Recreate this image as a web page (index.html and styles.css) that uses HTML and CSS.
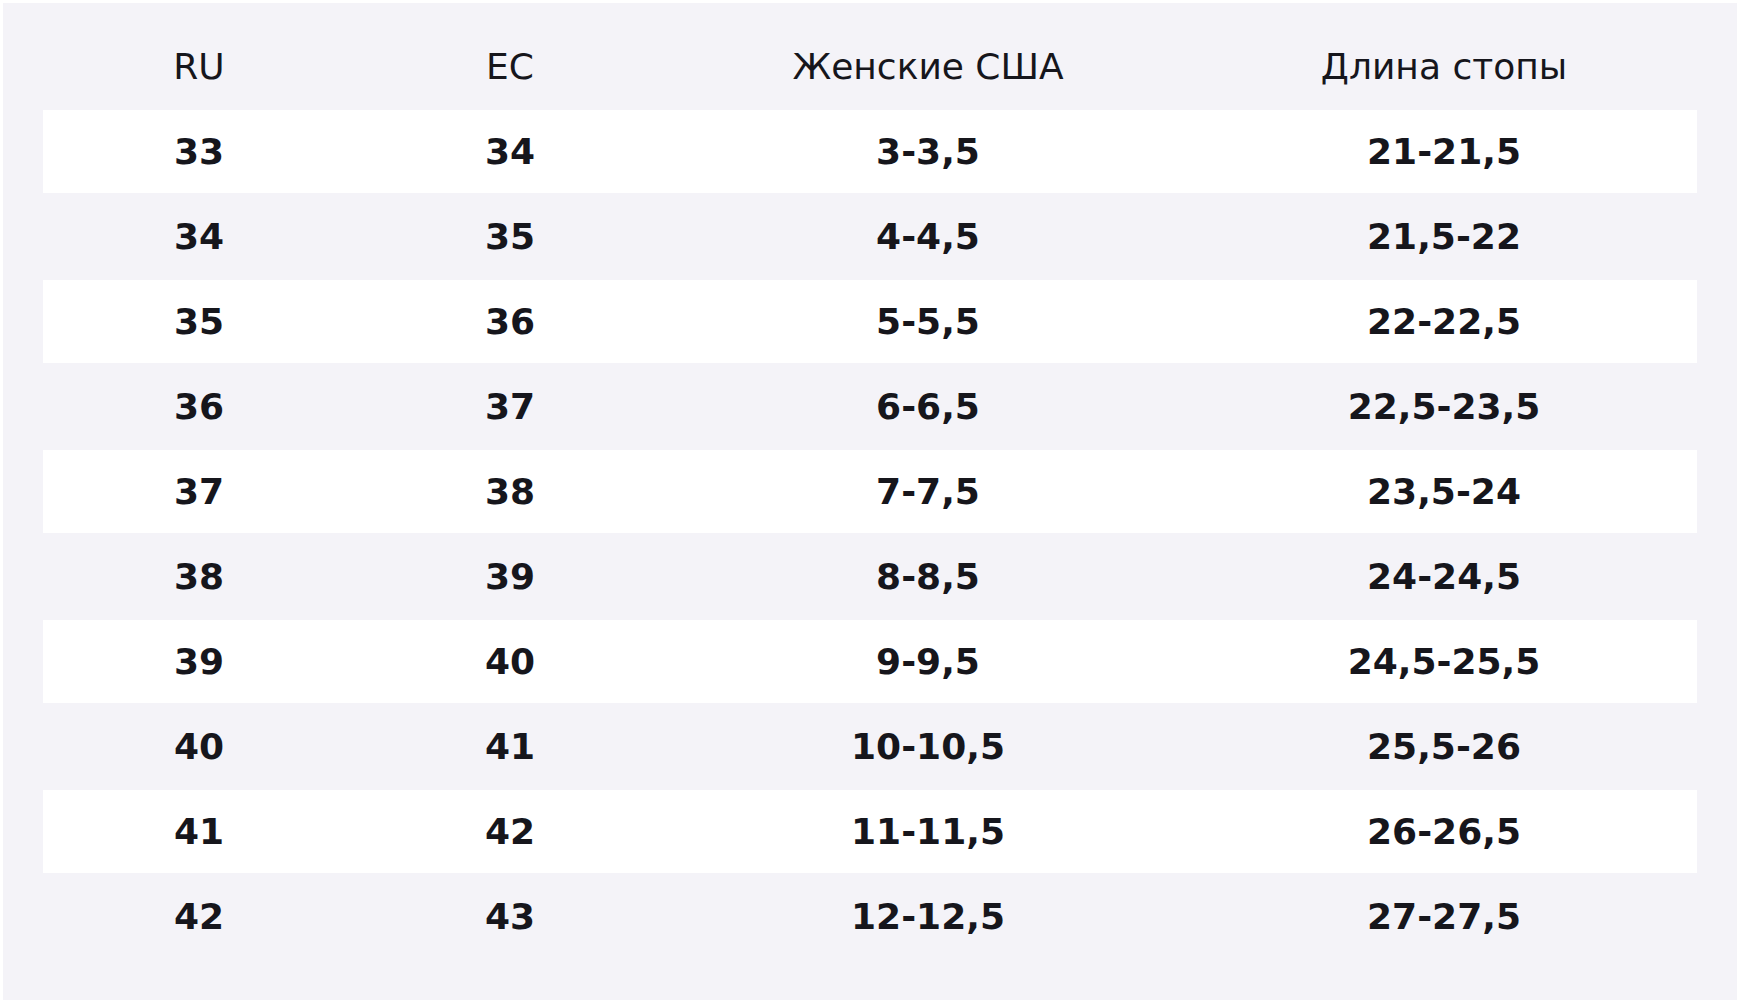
FILE: index.html
```html
<!DOCTYPE html>
<html lang="ru">
<head>
<meta charset="utf-8">
<title>Таблица размеров</title>
<link rel="stylesheet" href="styles.css">
</head>
<body>
<div class="card">
  <div class="table">
    <div class="row head">
      <div class="cell">RU</div>
      <div class="cell">EC</div>
      <div class="cell">Женские США</div>
      <div class="cell">Длина стопы</div>
    </div>
    <div class="row odd"><div class="cell">33</div><div class="cell">34</div><div class="cell">3-3,5</div><div class="cell">21-21,5</div></div>
    <div class="row"><div class="cell">34</div><div class="cell">35</div><div class="cell">4-4,5</div><div class="cell">21,5-22</div></div>
    <div class="row odd"><div class="cell">35</div><div class="cell">36</div><div class="cell">5-5,5</div><div class="cell">22-22,5</div></div>
    <div class="row"><div class="cell">36</div><div class="cell">37</div><div class="cell">6-6,5</div><div class="cell">22,5-23,5</div></div>
    <div class="row odd"><div class="cell">37</div><div class="cell">38</div><div class="cell">7-7,5</div><div class="cell">23,5-24</div></div>
    <div class="row"><div class="cell">38</div><div class="cell">39</div><div class="cell">8-8,5</div><div class="cell">24-24,5</div></div>
    <div class="row odd"><div class="cell">39</div><div class="cell">40</div><div class="cell">9-9,5</div><div class="cell">24,5-25,5</div></div>
    <div class="row"><div class="cell">40</div><div class="cell">41</div><div class="cell">10-10,5</div><div class="cell">25,5-26</div></div>
    <div class="row odd"><div class="cell">41</div><div class="cell">42</div><div class="cell">11-11,5</div><div class="cell">26-26,5</div></div>
    <div class="row"><div class="cell">42</div><div class="cell">43</div><div class="cell">12-12,5</div><div class="cell">27-27,5</div></div>
  </div>
</div>
</body>
</html>
```
FILE: styles.css
```css
html, body {
  margin: 0;
  padding: 0;
  background: #ffffff;
}

body {
  font-family: "DejaVu Sans", "Noto Sans", sans-serif;
  color: #16161c;
}

.card {
  margin: 3px;
  width: 1734px;
  height: 997px;
  box-sizing: border-box;
  padding: 40px;
  background: #f4f3f8;
}

.table {
  display: flex;
  flex-direction: column;
  gap: 2px;
}

.row {
  display: grid;
  grid-template-columns: 312px 310px 526px 506px;
  height: 83px;
  align-items: center;
  font-size: 36px;
  font-weight: bold;
  line-height: 42px;
}

.row.odd {
  background: #ffffff;
}

.row.head {
  height: 65px;
  align-items: start;
  padding-top: 3px;
  box-sizing: border-box;
  font-weight: normal;
}

.cell {
  text-align: center;
  white-space: nowrap;
}
```
